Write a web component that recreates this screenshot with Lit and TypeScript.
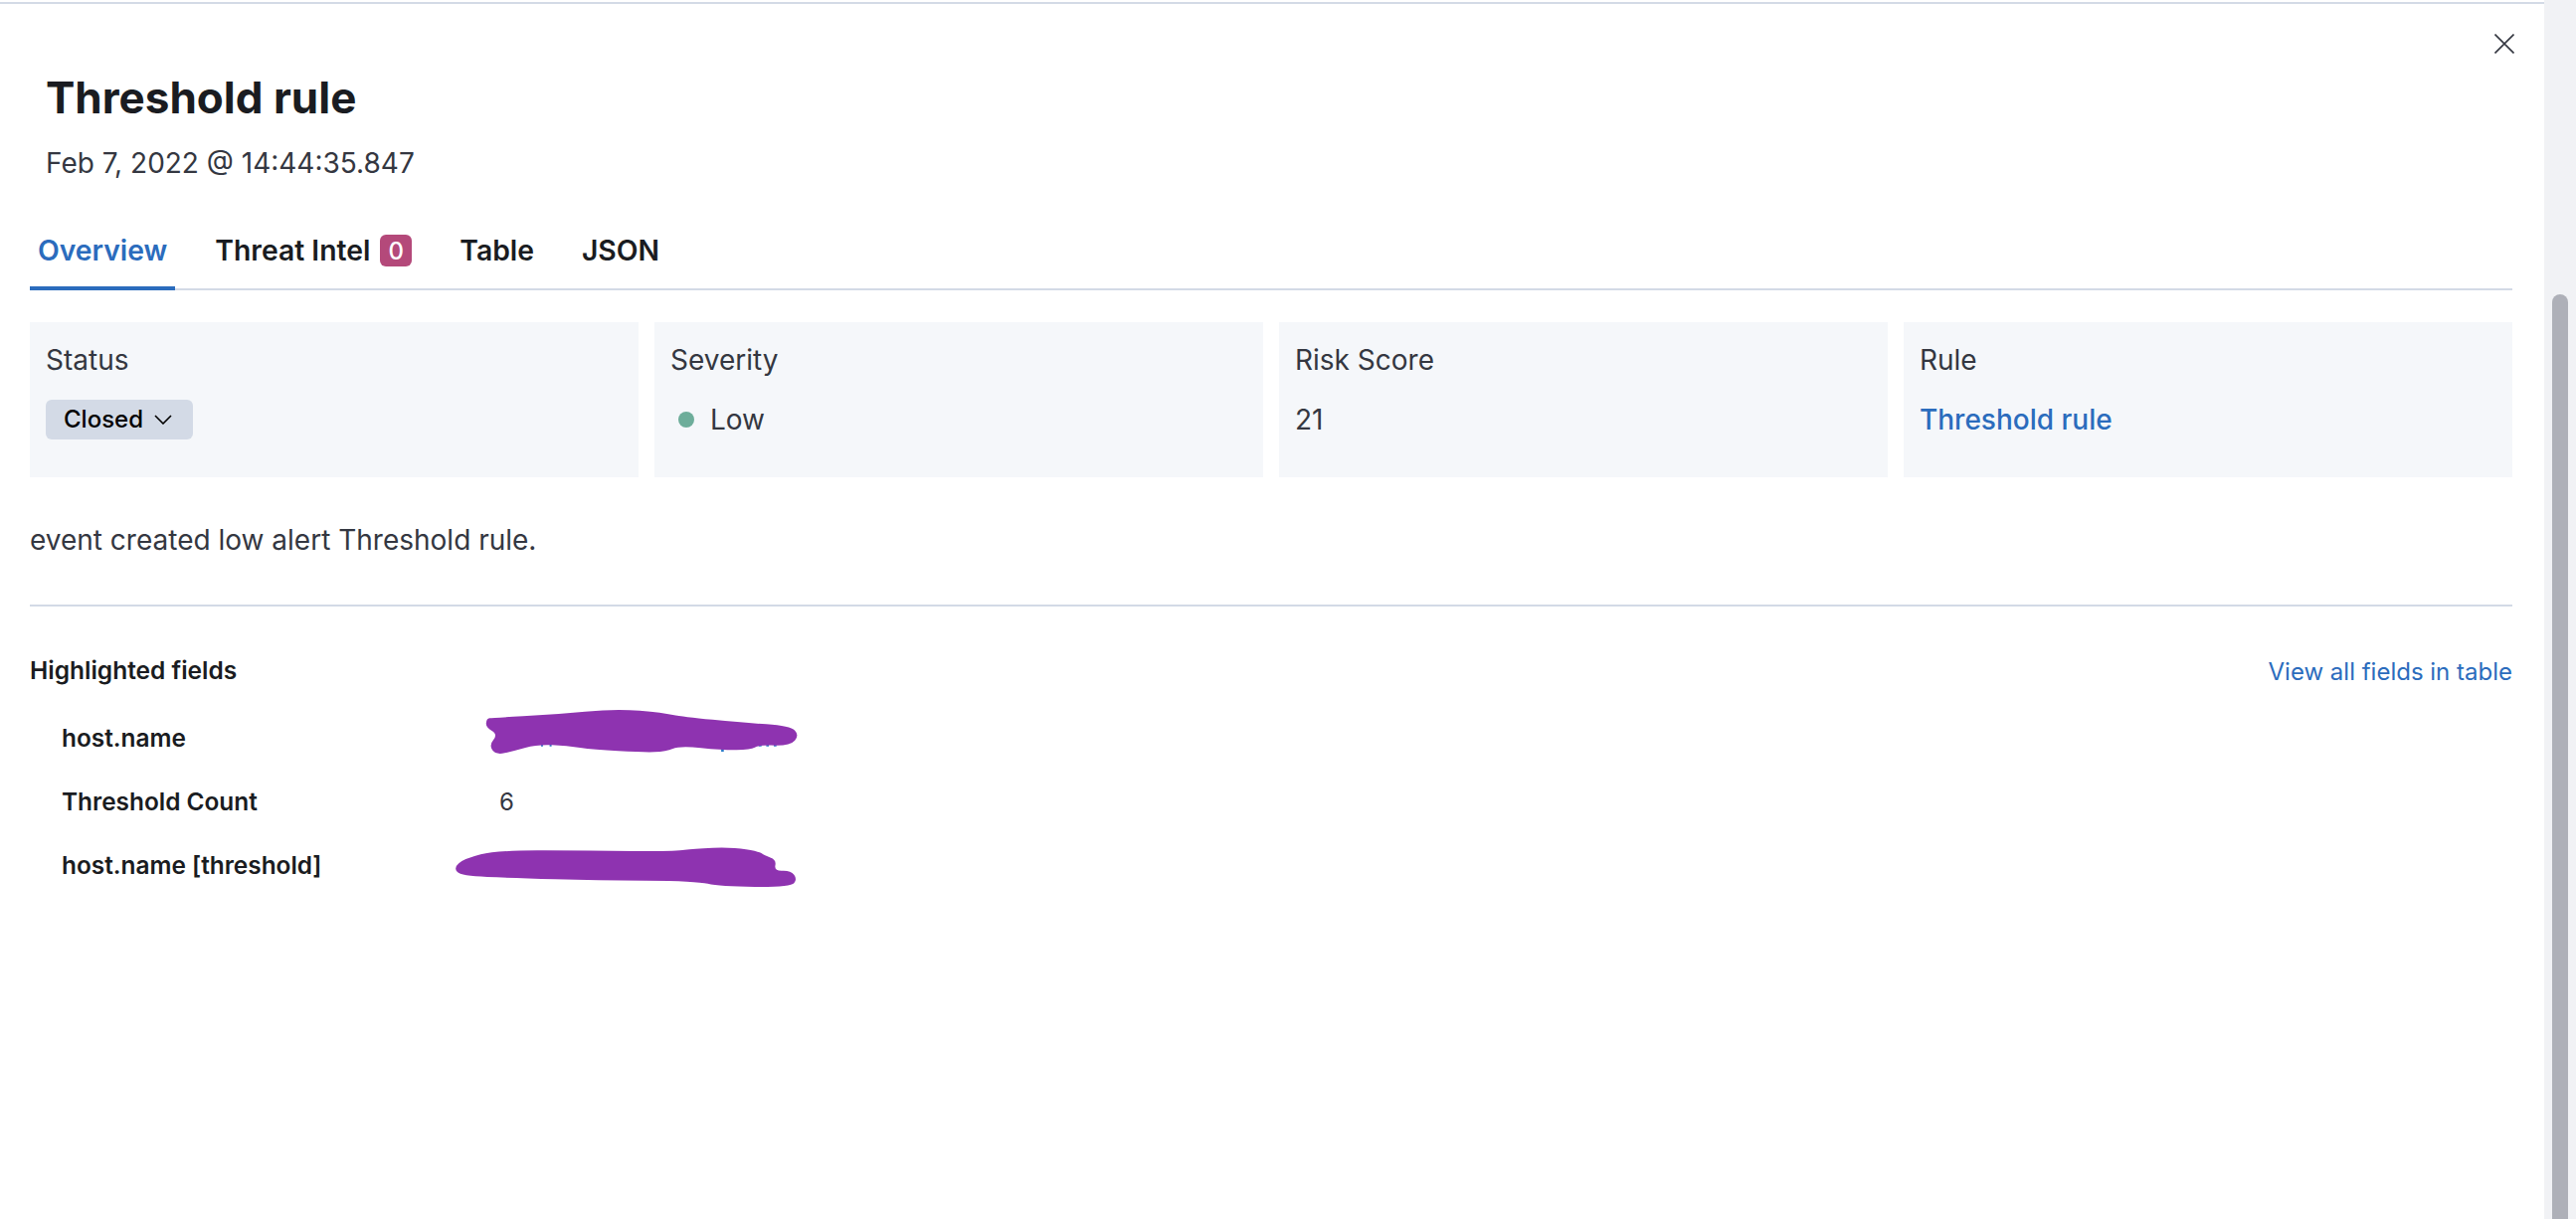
import { LitElement, html, css } from "lit";
import { customElement } from "lit/decorators.js";

type Pt = [number, number];

function smooth(pts: Pt[]): string {
  const mid = (a: Pt, b: Pt): Pt => [(a[0] + b[0]) / 2, (a[1] + b[1]) / 2];
  const n = pts.length;
  const s = mid(pts[n - 1], pts[0]);
  let d = `M${s[0]} ${s[1]}`;
  for (let i = 0; i < n; i++) {
    const m = mid(pts[i], pts[(i + 1) % n]);
    d += `Q${pts[i][0]} ${pts[i][1]} ${m[0]} ${m[1]}`;
  }
  return d + "Z";
}

const BLOB1: Pt[] = [[45,48],[230,38],[420,20],[560,33],[620,45],[800,62],[945,72],[972,100],[945,132],[850,130],[825,144],[740,145],[610,132],[570,150],[500,152],[350,144],[270,132],[180,128],[110,148],[55,160],[35,130],[62,98],[25,76],[28,50]];
const BLOB2: Pt[] = [[150,27],[430,29],[690,31],[740,22],[860,18],[940,31],[955,43],[992,56],[985,90],[1035,88],[1055,115],[1035,139],[820,137],[750,120],[450,118],[200,111],[40,105],[18,80],[50,53]];

@customElement("app-root")
export class AppRoot extends LitElement {
  static styles = css`
    :host { display: block; width: 2590px; height: 1226px; overflow: hidden; position: relative; background: #fff; font-family: Inter, "Liberation Sans", sans-serif; color: #343741; }
    .layout { display: flex; height: 1226px; }
    .flyout { width: 2558px; box-sizing: border-box; padding-top: 2px; position: relative; }
    .topline { height: 2px; background: #d3dae6; }
    .close { position: absolute; left: 2508px; top: 34px; width: 20px; height: 20px; display: block; }
    .track { width: 32px; background: #f1f2f5; position: relative; }
    .thumb { position: absolute; left: 8px; top: 296px; bottom: 0; width: 16px; background: #aeb0b8; border-radius: 8px 8px 0 0; }
    .body { padding: 0 32px 0 30px; }
    .header { padding: 66px 0 0 16px; }
    h1 { margin: 0; font-size: 44px; line-height: 56px; font-weight: 700; color: #1a1c21; }
    .date { font-size: 28px; line-height: 40px; margin-top: 18px; }
    .tabs { display: flex; height: 82px; margin-top: 26px; border-bottom: 2px solid #d3dae6; box-sizing: border-box; gap: 32px; }
    .tab { position: relative; padding: 2px 8px 0; font-size: 28.3px; font-weight: 600; color: #1a1c21; display: flex; align-items: center; gap: 10px; height: 82px; box-sizing: border-box; }
    .tab.active { color: #2b6cbd; }
    .tab.active::after { content: ""; position: absolute; left: 0; right: 0; bottom: 0; height: 4px; background: #2b6cbd; }
    .badge { background: #b4497a; color: #fff; border-radius: 6px; width: 32px; height: 32px; display: flex; align-items: center; justify-content: center; font-size: 24px; font-weight: 500; }
    .panels { display: grid; grid-template-columns: repeat(4, 612px); gap: 16px; margin-top: 32px; }
    .panel { background: #f5f7fa; height: 156px; padding: 20px 16px; box-sizing: border-box; font-size: 28px; line-height: 36px; }
    .val { margin-top: 22px; height: 40px; display: flex; align-items: center; }
    .pill { display: flex; align-items: center; gap: 11px; background: #d3dae6; border-radius: 6px; height: 40px; padding: 0 21px 0 18px; font-size: 24px; font-weight: 500; color: #000; }
    .dot { width: 16px; height: 16px; border-radius: 50%; background: #6dad9a; margin: 0 16px 0 8px; }
    .link { color: #2b6cbd; font-weight: 500; }
    .desc { margin: 0; font-size: 28px; line-height: 40px; padding-top: 43px; }
    hr { border: 0; height: 2px; background: #d3dae6; margin: 45px 0 0; }
    .hl { display: flex; justify-content: space-between; align-items: center; margin-top: 48px; height: 32px; }
    .hl b { font-size: 24.5px; font-weight: 600; color: #1a1c21; }
    .hl a { font-size: 24px; color: #2b6cbd; padding-top: 2px; }
    .rows { margin-top: 20px; padding-left: 32px; }
    .row { display: grid; grid-template-columns: 441px auto; height: 64px; align-items: center; font-size: 24.4px; }
    .row b { font-weight: 600; color: #1a1c21; }
    .cell { position: relative; height: 64px; display: flex; align-items: center; }
    .six { margin-left: -1px; font-size: 24px; }
    .blob { position: absolute; overflow: visible; }
    .b1 { left: -23px; top: -4px; }
    .b2 { left: -53px; top: 8px; }
  `;

  render() {
    return html`
      <div class="layout">
        <div class="flyout">
          <div class="topline"></div>
          <svg class="close" viewBox="0 0 20 20"><path d="M.5.5l19 19M19.5.5l-19 19" stroke="#343741" stroke-width="1.6" fill="none"></path></svg>
          <div class="body">
            <div class="header">
              <h1>Threshold rule</h1>
              <div class="date">Feb 7, 2022 @ 14:44:35.847</div>
            </div>
            <div class="tabs">
              <div class="tab active">Overview</div>
              <div class="tab">Threat Intel <span class="badge">0</span></div>
              <div class="tab">Table</div>
              <div class="tab">JSON</div>
            </div>
            <div class="panels">
              <div class="panel">Status
                <div class="val"><span class="pill">Closed
                  <svg width="18" height="10" viewBox="0 0 18 10"><path d="M1 1l8 8 8-8" stroke="#000" stroke-width="1.6" fill="none"></path></svg></span></div>
              </div>
              <div class="panel">Severity
                <div class="val"><span class="dot"></span>Low</div>
              </div>
              <div class="panel">Risk Score
                <div class="val">21</div>
              </div>
              <div class="panel">Rule
                <div class="val"><span class="link">Threshold rule</span></div>
              </div>
            </div>
            <p class="desc">event created low alert Threshold rule.</p>
            <hr />
            <div class="hl"><b>Highlighted fields</b><a>View all fields in table</a></div>
            <div class="rows">
              <div class="row"><b>host.name</b><div class="cell">
                <svg class="blob b1" width="333" height="60" viewBox="0 0 1000 180">
                  <path d="M192 118h6v16h-6zM218 118h6v16h-6zM736 125h8v25h-8zM850 118h8v16h-8zM872 118h8v16h-8zM895 118h8v16h-8z" fill="#2b78c8"></path>
                  <path d=${smooth(BLOB1)} fill="#8e33b0"></path>
                </svg></div></div>
              <div class="row"><b>Threshold Count</b><div class="cell"><span class="six">6</span></div></div>
              <div class="row"><b>host.name [threshold]</b><div class="cell">
                <svg class="blob b2" width="360" height="55" viewBox="0 0 1080 165"><path d=${smooth(BLOB2)} fill="#8e33b0"></path></svg></div></div>
            </div>
          </div>
        </div>
        <div class="track"><div class="thumb"></div></div>
      </div>
    `;
  }
}
